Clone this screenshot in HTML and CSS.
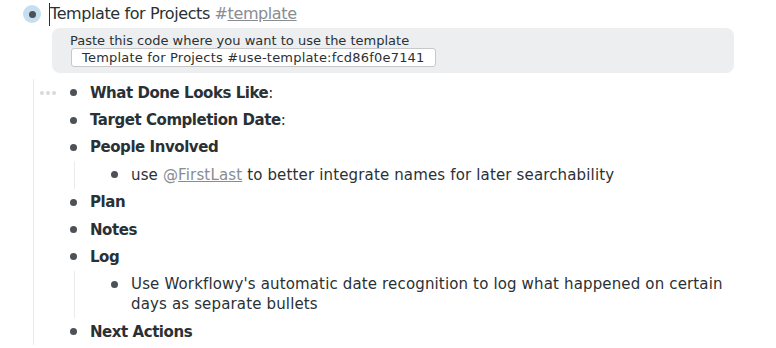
FILE: index.html
```html
<!DOCTYPE html>
<html lang="en">

<head>
    <meta charset="UTF-8">
    <meta name="viewport" content="width=device-width, initial-scale=1.0">
    <title>Template for Projects</title>
    <link rel="stylesheet" href="styles.css">
</head>

<body>
    <div class="page">
        <div class="root-row">
            <span class="root-bullet"><span class="dot"></span></span>
            <span class="caret"></span>
            <span class="root-name">Template for Projects <span class="tag">#<u>template</u></span></span>
        </div>

        <div class="template-box">
            <div class="template-hint">Paste this code where you want to use the template</div>
            <div class="template-code">Template for Projects #use-template:fcd86f0e7141</div>
        </div>

        <div class="children">
            <div class="item">
                <div class="row">
                    <span class="handle"><i></i><i></i><i></i></span>
                    <span class="bullet"></span>
                    <span class="text"><b>What Done Looks Like</b>:</span>
                </div>
            </div>
            <div class="item">
                <div class="row">
                    <span class="handle"></span>
                    <span class="bullet"></span>
                    <span class="text"><b>Target Completion Date</b>:</span>
                </div>
            </div>
            <div class="item">
                <div class="row">
                    <span class="handle"></span>
                    <span class="bullet"></span>
                    <span class="text"><b>People Involved</b></span>
                </div>
                <div class="children nested">
                    <div class="item">
                        <div class="row">
                            <span class="handle"></span>
                            <span class="bullet"></span>
                            <span class="text">use <span class="tag">@<u>FirstLast</u></span> to better integrate names for later searchability</span>
                        </div>
                    </div>
                </div>
            </div>
            <div class="item">
                <div class="row">
                    <span class="handle"></span>
                    <span class="bullet"></span>
                    <span class="text"><b>Plan</b></span>
                </div>
            </div>
            <div class="item">
                <div class="row">
                    <span class="handle"></span>
                    <span class="bullet"></span>
                    <span class="text"><b>Notes</b></span>
                </div>
            </div>
            <div class="item">
                <div class="row">
                    <span class="handle"></span>
                    <span class="bullet"></span>
                    <span class="text"><b>Log</b></span>
                </div>
                <div class="children nested">
                    <div class="item">
                        <div class="row">
                            <span class="handle"></span>
                            <span class="bullet"></span>
                            <span class="text">Use Workflowy's automatic date recognition to log what happened on certain days as separate bullets</span>
                        </div>
                    </div>
                </div>
            </div>
            <div class="item">
                <div class="row">
                    <span class="handle"></span>
                    <span class="bullet"></span>
                    <span class="text"><b>Next Actions</b></span>
                </div>
            </div>
        </div>
    </div>
</body>

</html>
```

FILE: styles.css
```css
body {
    margin: 0;
    font-family: 'DejaVu Sans', Verdana, sans-serif;
    color: #2a3135;
    background-color: white;
}

.page {
    padding: 2px 42px 0 23px;
}

.root-row {
    display: flex;
    align-items: center;
    height: 24px;
}

.root-bullet {
    display: flex;
    align-items: center;
    justify-content: center;
    width: 18px;
    height: 18px;
    border-radius: 50%;
    background-color: #c6dff0;
}

.root-bullet .dot {
    width: 7px;
    height: 7px;
    border-radius: 50%;
    background-color: #4b5157;
}

.caret {
    width: 1px;
    height: 23px;
    margin-left: 8px;
    background-color: #2a3135;
}

.root-name {
    font-size: 16px;
    line-height: 24px;
    letter-spacing: -0.4px;
}

.tag {
    color: #888d92;
}

.tag u {
    text-decoration-color: #888d92;
}

.template-box {
    margin: 2px 0 0 29px;
    padding: 5px 18px 6px;
    background-color: #edeef0;
    border-radius: 8px;
    font-size: 13px;
}

.template-hint {
    line-height: 15px;
}

.template-code {
    display: inline-block;
    margin-left: 1px;
    padding: 0 10px;
    line-height: 17px;
    letter-spacing: 0.2px;
    background-color: white;
    border: 1px solid #c8c8c8;
    border-radius: 3px;
}

.children {
    margin: 6px 0 0 10px;
    border-left: 1px solid #ebebeb;
}

.children.nested {
    margin: 0 0 0 40px;
}

.row {
    display: flex;
    align-items: flex-start;
    padding: 3.7px 0 3.7px 4px;
    font-size: 15px;
    line-height: 20px;
}

.handle {
    display: flex;
    align-items: center;
    gap: 2px;
    flex: none;
    width: 24px;
    height: 20px;
    padding-left: 2px;
}

.handle i {
    width: 4px;
    height: 4px;
    border-radius: 50%;
    background-color: #d9dadc;
}

.bullet {
    display: flex;
    align-items: center;
    justify-content: center;
    flex: none;
    width: 18px;
    height: 20px;
    margin-right: 8px;
}

.bullet::before {
    content: "";
    width: 7px;
    height: 7px;
    border-radius: 50%;
    background-color: #4b5157;
}

.text {
    letter-spacing: 0.15px;
}

.text b {
    font-weight: bold;
    letter-spacing: -0.45px;
}
```
